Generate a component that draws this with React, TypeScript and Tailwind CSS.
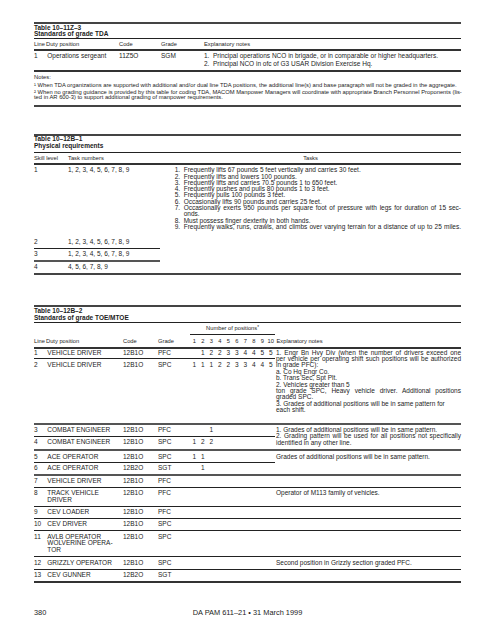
import React from "react";

type RowProps = {
  line: string;
  duty: React.ReactNode;
  code: string;
  grade: string;
  nums?: string[];
  className?: string;
};

const EMPTY = ["", "", "", "", "", "", "", "", "", ""];

function LeftRow({ line, duty, code, grade, nums = EMPTY, className = "" }: RowProps) {
  return (
    <div className={`grid grid-cols-[11px_78px_35px_32px_repeat(10,8.5px)] ${className}`}>
      <div>{line}</div>
      <div className="pl-[2.3px]">{duty}</div>
      <div>{code}</div>
      <div>{grade}</div>
      {nums.map((v, i) => (
        <div key={i} className="text-center">
          {v}
        </div>
      ))}
    </div>
  );
}

function FullRow({
  line,
  duty,
  code,
  grade,
  nums = EMPTY,
  note = "",
  className = "",
}: RowProps & { note?: string }) {
  return (
    <div className={`grid grid-cols-[11px_78px_35px_32px_repeat(10,8.5px)_1fr] ${className}`}>
      <div>{line}</div>
      <div className="pl-[2.3px]">{duty}</div>
      <div>{code}</div>
      <div>{grade}</div>
      {nums.map((v, i) => (
        <div key={i} className="text-center">
          {v}
        </div>
      ))}
      <div className="pl-[1px]">{note}</div>
    </div>
  );
}

function Item({ n, children }: { n: string; children: React.ReactNode }) {
  return (
    <div className="flex">
      <span className="w-[9px] shrink-0">{n}</span>
      <div className="flex-1">{children}</div>
    </div>
  );
}

const J = "text-justify [text-align-last:justify] whitespace-nowrap";

export default function App() {
  return (
    <div className="w-[495px] h-[640px] bg-white text-[#1c1c1c] font-['Liberation_Sans',Arial,sans-serif] px-[34px] pt-[22px]">
      {/* Table 10-11Z-3 */}
      <div className="border-t-2 border-[#444]">
        <div className="pt-[1px] pb-[1px] border-b border-[#222] font-bold text-[6.5px] leading-[6px]">
          <div>Table 10–11Z–3</div>
          <div>Standards of grade TDA</div>
        </div>
        <div className="grid grid-cols-[11px_74px_42px_43px_1fr] text-[5.75px] leading-[6px] pt-[2px] pb-[2px] border-b-2 border-[#333]">
          <div>Line</div>
          <div className="pl-[1px]">Duty position</div>
          <div>Code</div>
          <div>Grade</div>
          <div>Explanatory notes</div>
        </div>
        <div className="grid grid-cols-[11px_74px_42px_43px_1fr] text-[6.5px] leading-[6.3px] pt-[2px] pb-[3px] border-b-2 border-[#333]">
          <div>1</div>
          <div className="pl-[2.3px]">Operations sergeant</div>
          <div>11Z5O</div>
          <div>SGM</div>
          <div>
            <Item n="1.">Principal operations NCO in brigade, or in comparable or higher headquarters.</Item>
            <div className="mt-[1.5px]">
              <Item n="2.">Principal NCO in ofc of G3 USAR Division Exercise Hq.</Item>
            </div>
          </div>
        </div>
        <div className="text-[5.8px] leading-[5.8px] pt-[3px] pb-[4px] border-b-2 border-[#444]">
          <div>Notes:</div>
          <div className="mt-[2px] whitespace-nowrap">
            ¹ When TDA organizations are supported with additional and/or dual line TDA positions, the additional line(s) and base paragraph will not be graded in the aggregate.
          </div>
          <div className="mt-[1px]">
            <div className={J}>
              ² When no grading guidance is provided by this table for coding TDA, MACOM Manpower Managers will coordinate with appropriate Branch Personnel Proponents (lis-
            </div>
            <div>ted in AR 600-3) to support additional grading of manpower requirements.</div>
          </div>
        </div>
      </div>

      {/* Table 10-12B-1 */}
      <div className="mt-[27px] border-t-2 border-[#444]">
        <div className="pb-[3px] border-b border-[#222] font-bold text-[6.5px] leading-[6.5px]">
          <div>Table 10–12B–1</div>
          <div>Physical requirements</div>
        </div>
        <div className="grid grid-cols-[34px_92px_1fr] text-[5.75px] leading-[6px] pt-[1.5px] pb-[2px] border-b-2 border-[#333]">
          <div>Skill level</div>
          <div>Task numbers</div>
          <div className="text-center">Tasks</div>
        </div>
        <div className="grid grid-cols-[34px_92px_1fr] text-[6.5px] leading-[6.3px] pt-[2.5px] pb-[8.5px]">
          <div>1</div>
          <div>1, 2, 3, 4, 5, 6, 7, 8, 9</div>
          <div className="pl-[14.7px]">
            <Item n="1.">Frequently lifts 67 pounds 5 feet vertically and carries 30 feet.</Item>
            <Item n="2.">Frequently lifts and lowers 100 pounds.</Item>
            <Item n="3.">Frequently lifts and carries 70.5 pounds 1 to 650 feet.</Item>
            <Item n="4.">Frequently pushes and pulls 80 pounds 1 to 3 feet.</Item>
            <Item n="5.">Frequently pulls 100 pounds 3 feet.</Item>
            <Item n="6.">Occasionally lifts 90 pounds and carries 25 feet.</Item>
            <Item n="7.">
              <div className={J}>
                Occasionally exerts 950 pounds per square foot of pressure with legs for duration of 15 sec-
              </div>
              <div>onds.</div>
            </Item>
            <Item n="8.">Must possess finger dexterity in both hands.</Item>
            <Item n="9.">
              <div className={J}>
                Frequently walks, runs, crawls, and climbs over varying terrain for a distance of up to 25 miles.
              </div>
            </Item>
          </div>
        </div>
        <div className="border-b-2 border-[#444] text-[6.5px] leading-[6.3px]">
          <div className="w-[126px]">
            <div className="grid grid-cols-[34px_92px] pb-[2.5px] border-b border-[#222]">
              <div>2</div>
              <div>1, 2, 3, 4, 5, 6, 7, 8, 9</div>
            </div>
            <div className="grid grid-cols-[34px_92px] pt-[2px] pb-[3.4px] border-b-2 border-[#555]">
              <div>3</div>
              <div>1, 2, 3, 4, 5, 6, 7, 8, 9</div>
            </div>
            <div className="grid grid-cols-[34px_92px] pt-[1.5px] pb-[2.5px]">
              <div>4</div>
              <div>4, 5, 6, 7, 8, 9</div>
            </div>
          </div>
        </div>
      </div>

      {/* Table 10-12B-2 */}
      <div className="mt-[30px] border-t-2 border-[#444]">
        <div className="pb-[1.5px] border-b border-[#222] font-bold text-[6.5px] leading-[7px]">
          <div>Table 10–12B–2</div>
          <div>Standards of grade TOE/MTOE</div>
        </div>
        <div className="text-[5.75px] leading-[6px]">
          <div className="grid grid-cols-[11px_78px_35px_32px_85px_1fr]">
            <div />
            <div />
            <div />
            <div />
            <div className="pt-[2px] pb-[2px] border-b border-[#222] text-center">
              Number of positions<span className="relative top-[-1.5px] text-[4.5px]">*</span>
            </div>
            <div />
          </div>
          <div className="grid grid-cols-[11px_78px_35px_32px_repeat(10,8.5px)_1fr] pt-[2.5px] pb-[3.5px] border-b-2 border-[#333]">
            <div>Line</div>
            <div className="pl-[1px]">Duty position</div>
            <div>Code</div>
            <div>Grade</div>
            {["1", "2", "3", "4", "5", "6", "7", "8", "9", "10"].map((v) => (
              <div key={v} className="text-center">
                {v}
              </div>
            ))}
            <div className="pl-[1.5px]">Explanatory notes</div>
          </div>
        </div>

        <div className="text-[6.5px] leading-[6.3px]">
          {/* Rows 1-2 */}
          <div className="flex border-b-2 border-[#555]">
            <div className="w-[241px]">
              <LeftRow
                line="1"
                duty="VEHICLE DRIVER"
                code="12B1O"
                grade="PFC"
                nums={["", "1", "2", "2", "3", "3", "4", "4", "5", "5"]}
                className="pt-[0.5px] pb-[2px] border-b border-[#222]"
              />
              <LeftRow
                line="2"
                duty="VEHICLE DRIVER"
                code="12B1O"
                grade="SPC"
                nums={["1", "1", "1", "2", "2", "3", "3", "4", "4", "5"]}
                className="pt-[3.3px]"
              />
            </div>
            <div className="flex-1 pl-[1px] pt-[0.5px] pb-[9.7px] leading-[6.4px]">
              <div className={J}>1. Engr Bn Hvy Div (when the number of drivers exceed one</div>
              <div className={J}>per vehicle per operating shift such positions will be authorized</div>
              <div>in grade PFC):</div>
              <div>a. Co Hq Engr Co.</div>
              <div>b. Trans Sec, Spt Plt.</div>
              <div>2. Vehicles greater than 5</div>
              <div className={J}>ton grade SPC, Heavy vehicle driver. Additional positions</div>
              <div>graded SPC.</div>
              <div>3. Grades of additional positions will be in same pattern for</div>
              <div>each shift.</div>
            </div>
          </div>

          {/* Rows 3-4 */}
          <div className="flex border-b-2 border-[#555]">
            <div className="w-[241px]">
              <LeftRow
                line="3"
                duty="COMBAT ENGINEER"
                code="12B1O"
                grade="PFC"
                nums={["", "", "1", "", "", "", "", "", "", ""]}
                className="pt-[1.8px] pb-[2.6px] border-b border-[#222]"
              />
              <LeftRow
                line="4"
                duty="COMBAT ENGINEER"
                code="12B1O"
                grade="SPC"
                nums={["1", "2", "2", "", "", "", "", "", "", ""]}
                className="pt-[2.5px]"
              />
            </div>
            <div className="flex-1 pl-[1px] pt-[1.8px] pb-[2.6px]">
              <div>1. Grades of additional positions will be in same pattern.</div>
              <div className={J}>2. Grading pattern will be used for all positions not specifically</div>
              <div>identified in any other line.</div>
            </div>
          </div>

          {/* Rows 5-6 */}
          <div className="flex border-b-2 border-[#555]">
            <div className="w-[241px]">
              <LeftRow
                line="5"
                duty="ACE OPERATOR"
                code="12B1O"
                grade="SPC"
                nums={["1", "1", "", "", "", "", "", "", "", ""]}
                className="pt-[3.2px] pb-[1.8px] border-b border-[#222]"
              />
              <LeftRow
                line="6"
                duty="ACE OPERATOR"
                code="12B2O"
                grade="SGT"
                nums={["", "1", "", "", "", "", "", "", "", ""]}
                className="pt-[2.5px] pb-[2.5px]"
              />
            </div>
            <div className="flex-1 pl-[1px] pt-[3.2px]">
              <div>Grades of additional positions will be in same pattern.</div>
            </div>
          </div>

          <FullRow line="7" duty="VEHICLE DRIVER" code="12B1O" grade="PFC" className="pt-[2.2px] pb-[2.2px] border-b border-[#222]" />
          <FullRow
            line="8"
            duty={
              <>
                TRACK VEHICLE
                <br />
                DRIVER
              </>
            }
            code="12B1O"
            grade="PFC"
            note="Operator of M113 family of vehicles."
            className="pt-[2.5px] pb-[2.8px] border-b border-[#222]"
          />
          <FullRow line="9" duty="CEV LOADER" code="12B1O" grade="PFC" className="pt-[2.5px] pb-[2.8px] border-b border-[#222]" />
          <FullRow line="10" duty="CEV DRIVER" code="12B1O" grade="SPC" className="pt-[2.1px] pb-[2.1px] border-b border-[#222]" />
          <FullRow
            line="11"
            duty={
              <>
                AVLB OPERATOR
                <br />
                WOLVERINE OPERA-
                <br />
                TOR
              </>
            }
            code="12B1O"
            grade="SPC"
            className="pt-[3.2px] pb-[3px] border-b border-[#222]"
          />
          <FullRow
            line="12"
            duty="GRIZZLY OPERATOR"
            code="12B1O"
            grade="SPC"
            note="Second position in Grizzly section graded PFC."
            className="pt-[3.1px] pb-[2.4px] border-b border-[#222]"
          />
          <FullRow line="13" duty="CEV GUNNER" code="12B2O" grade="SGT" className="pt-[2.5px] pb-[2.5px] border-b-2 border-[#333]" />
        </div>
      </div>

      {/* Footer */}
      <div className="mt-[25.6px] grid grid-cols-3 text-[7.4px] leading-[8px]">
        <div>380</div>
        <div className="text-center whitespace-nowrap">DA PAM 611–21 • 31 March 1999</div>
        <div />
      </div>
    </div>
  );
}
